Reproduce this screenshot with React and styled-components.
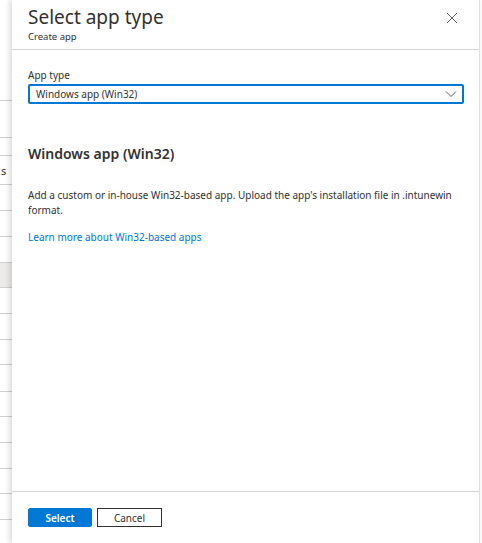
import React from "react";
import styled, { createGlobalStyle } from "styled-components";

const GlobalStyle = createGlobalStyle`
  html, body {
    margin: 0;
    padding: 0;
    background: #fff;
    overflow: hidden;
  }
  body {
    font-family: "Segoe UI", "Noto Sans", "Open Sans", sans-serif;
    color: #323130;
  }
`;

const Page = styled.div`
  position: relative;
  width: 482px;
  height: 543px;
  overflow: hidden;
  background: #fff;
`;

const Backdrop = styled.div`
  display: flex;
  flex-direction: column;
  width: 12px;
  overflow: hidden;
`;

const BackRow = styled.div`
  box-sizing: border-box;
  height: ${(p) => p.h}px;
  flex-shrink: 0;
  border-bottom: ${(p) => (p.noLine ? "none" : "1px solid #d2d0ce")};
  background: ${(p) => (p.selected ? "#ecebea" : "transparent")};
  display: flex;
  align-items: center;
  padding-left: 1px;
  font-size: 11px;
  white-space: nowrap;
  color: #323130;
`;

const Panel = styled.div`
  position: absolute;
  top: 0;
  bottom: 0;
  left: 12px;
  right: 2px;
  display: flex;
  flex-direction: column;
  background: #fff;
  border-right: 1px solid #e1dfdd;
  box-shadow: -2px 0 6px rgba(0, 0, 0, 0.16);
`;

const Header = styled.div`
  position: relative;
  height: 50px;
  box-sizing: border-box;
  padding: 4px 16px 0;
  border-bottom: 1px solid #d6d4d2;
`;

const Title = styled.h1`
  margin: 0;
  font-size: 19px;
  font-weight: 400;
  line-height: 27px;
  color: #323130;
`;

const Subtitle = styled.div`
  font-size: 9.5px;
  line-height: 12px;
  color: #323130;
`;

const CloseButton = styled.button`
  position: absolute;
  top: 10px;
  right: 19px;
  width: 16px;
  height: 16px;
  padding: 0;
  border: none;
  background: none;
  display: flex;
  align-items: center;
  justify-content: center;
`;

const Body = styled.div`
  flex: 1;
  padding: 18px 16px 0;
`;

const Label = styled.div`
  font-size: 10px;
  line-height: 15px;
  margin-bottom: 1px;
`;

const Select = styled.div`
  box-sizing: border-box;
  width: 436px;
  height: 20px;
  border: 2px solid #0078d4;
  border-radius: 2px;
  display: flex;
  align-items: center;
  justify-content: space-between;
  padding: 0 5px 0 6px;
  font-size: 10px;
`;

const Heading = styled.h2`
  margin: 40px 0 0;
  font-size: 14px;
  font-weight: 600;
  line-height: 20px;
  color: #323130;
`;

const Paragraph = styled.p`
  margin: 24px 0 0;
  font-size: 10px;
  line-height: 15px;
`;

const Link = styled.a`
  display: inline-block;
  margin-top: 12px;
  font-size: 10px;
  line-height: 15px;
  color: #0078d4;
  text-decoration: none;
`;

const Footer = styled.div`
  display: flex;
  gap: 5px;
  height: 52px;
  box-sizing: border-box;
  padding: 16px 16px 0;
  border-top: 1px solid #d6d4d2;
`;

const Button = styled.button`
  box-sizing: border-box;
  width: ${(p) => (p.primary ? 64 : 65)}px;
  height: 19px;
  padding: 0;
  font-family: inherit;
  font-size: 10px;
  font-weight: ${(p) => (p.primary ? 600 : 400)};
  color: ${(p) => (p.primary ? "#fff" : "#323130")};
  background: ${(p) => (p.primary ? "#0078d4" : "#fff")};
  border: 1px solid ${(p) => (p.primary ? "#0078d4" : "#323130")};
  border-radius: ${(p) => (p.primary ? "2px" : "0")};
`;

const backRows = [
  { h: 101 },
  { h: 37 },
  { h: 18 },
  { h: 29, text: "s" },
  { h: 26 },
  { h: 26 },
  { h: 26 },
  { h: 25, selected: true },
  { h: 26 },
  { h: 26 },
  { h: 25 },
  { h: 27 },
  { h: 25 },
  { h: 26 },
  { h: 26 },
  { h: 25 },
  { h: 26 },
  { h: 30, noLine: true },
];

export default function App() {
  return (
    <Page>
      <GlobalStyle />
      <Backdrop>
        {backRows.map((r, i) => (
          <BackRow key={i} h={r.h} selected={r.selected} noLine={r.noLine}>
            {r.text}
          </BackRow>
        ))}
      </Backdrop>
      <Panel>
        <Header>
          <Title>Select app type</Title>
          <Subtitle>Create app</Subtitle>
          <CloseButton aria-label="Close">
            <svg width="12" height="12" viewBox="0 0 12 12">
              <path d="M1 1L11 11M11 1L1 11" stroke="#605e5c" strokeWidth="1" />
            </svg>
          </CloseButton>
        </Header>
        <Body>
          <Label>App type</Label>
          <Select>
            <span>Windows app (Win32)</span>
            <svg width="12" height="8" viewBox="0 0 12 8">
              <path d="M1 1.5L6 6.5L11 1.5" fill="none" stroke="#605e5c" strokeWidth="1" />
            </svg>
          </Select>
          <Heading>Windows app (Win32)</Heading>
          <Paragraph>
            Add a custom or in-house Win32-based app. Upload the app's installation file in .intunewin format.
          </Paragraph>
          <Link href="#">Learn more about Win32-based apps</Link>
        </Body>
        <Footer>
          <Button primary>Select</Button>
          <Button>Cancel</Button>
        </Footer>
      </Panel>
    </Page>
  );
}
